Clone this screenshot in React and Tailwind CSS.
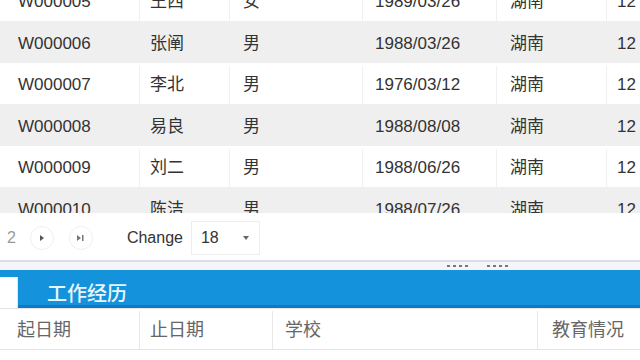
import React from 'react';

const rows = [
  { id: 'W000005', name: '王西', sex: '女', date: '1989/03/26', place: '湖南', num: '12' },
  { id: 'W000006', name: '张阐', sex: '男', date: '1988/03/26', place: '湖南', num: '12' },
  { id: 'W000007', name: '李北', sex: '男', date: '1976/03/12', place: '湖南', num: '12' },
  { id: 'W000008', name: '易良', sex: '男', date: '1988/08/08', place: '湖南', num: '12' },
  { id: 'W000009', name: '刘二', sex: '男', date: '1988/06/26', place: '湖南', num: '12' },
  { id: 'W000010', name: '陈洁', sex: '男', date: '1988/07/26', place: '湖南', num: '12' },
];

const font = "font-['Liberation_Sans','Noto_Sans_CJK_SC',sans-serif]";

const Dots = () => (
  <div className="flex gap-[3px]">
    {[0, 1, 2, 3].map((d) => (
      <div key={d} className="w-[3px] h-[2px] bg-[#777]" />
    ))}
  </div>
);

const App = () => {
  return (
    <div className={`w-[640px] h-[360px] overflow-hidden bg-white text-[#333] ${font}`}>
      {/* Main grid body */}
      <div className="h-[213px] overflow-hidden">
        <div className="-mt-[20.5px]">
          {rows.map((r, i) => (
            <div
              key={r.id}
              className={`flex h-[41.5px] items-center pt-[3px] text-[17px] ${i % 2 === 1 ? 'bg-[#efefef]' : 'bg-white'}`}
            >
              <div className="w-[140px] h-full flex items-center pl-[18px] border-r border-[#f0f0f0]">{r.id}</div>
              <div className="w-[90px] h-full flex items-center pl-[10px] border-r border-[#f0f0f0]">{r.name}</div>
              <div className="w-[133px] h-full flex items-center pl-[13px] border-r border-[#f0f0f0]">{r.sex}</div>
              <div className="w-[134px] h-full flex items-center pl-[12px] border-r border-[#f0f0f0]">{r.date}</div>
              <div className="w-[110px] h-full flex items-center pl-[13px] border-r border-[#f0f0f0]">{r.place}</div>
              <div className="flex-1 h-full flex items-center pl-[10px]">{r.num}</div>
            </div>
          ))}
        </div>
      </div>

      {/* Pager */}
      <div className="h-[47px] flex items-center pt-[2px]">
        <span className="ml-[7px] text-[16px] text-[#999]">2</span>
        <div className="ml-[14px] w-[24px] h-[24px] rounded-full border border-[#f0f0f0] flex items-center justify-center">
          <svg width="8" height="8" viewBox="0 0 8 8">
            <path d="M2 1 L6 4 L2 7 Z" fill="#555" />
          </svg>
        </div>
        <div className="ml-[15px] w-[24px] h-[24px] rounded-full border border-[#f0f0f0] flex items-center justify-center">
          <svg width="9" height="8" viewBox="0 0 9 8">
            <path d="M1 1 L5 4 L1 7 Z" fill="#777" />
            <rect x="6" y="1" width="1.5" height="6" fill="#777" />
          </svg>
        </div>
        <span className="ml-[34px] text-[16px] text-[#333]">Change</span>
        <div className="ml-[8px] w-[69px] h-[34px] border border-[#eeeeee] flex items-center">
          <span className="ml-[9px] text-[16px] text-[#333]">18</span>
          <svg className="ml-[23px]" width="8" height="6" viewBox="0 0 8 6">
            <path d="M1 1 L7 1 L4 5 Z" fill="#666" />
          </svg>
        </div>
      </div>

      {/* Splitter */}
      <div className="h-[10px] border-t-2 border-[#dcdce8] bg-[#f5f5f9] flex items-center">
        <div className="ml-[447px]">
          <Dots />
        </div>
        <div className="ml-[19px]">
          <Dots />
        </div>
      </div>

      {/* Blue tab bar */}
      <div className="h-[38px] flex bg-[#1592dc] border-b-[3px] border-[#1279c0]">
        <div className="w-[18px] h-[31px] self-end -mb-[3px] bg-white border-r border-[#e4e4e4]" />
        <span className="ml-[29px] mt-[12px] text-[20px] text-[#e8f7ff] font-medium leading-[24px]">工作经历</span>
      </div>

      {/* Lower grid header */}
      <div className="h-[42px] flex border-t border-[#bfe6f7] border-b border-[#e4e4e4] text-[18px] text-[#666] pt-[2px]">
        <div className="w-[140px] flex items-center pl-[17px] border-r border-[#e8e8e8]">起日期</div>
        <div className="w-[133px] flex items-center pl-[10px] border-r border-[#e8e8e8]">止日期</div>
        <div className="w-[265px] flex items-center pl-[12px] border-r border-[#e8e8e8]">学校</div>
        <div className="flex-1 flex items-center pl-[14px]">教育情况</div>
      </div>
    </div>
  );
};

export default App;
